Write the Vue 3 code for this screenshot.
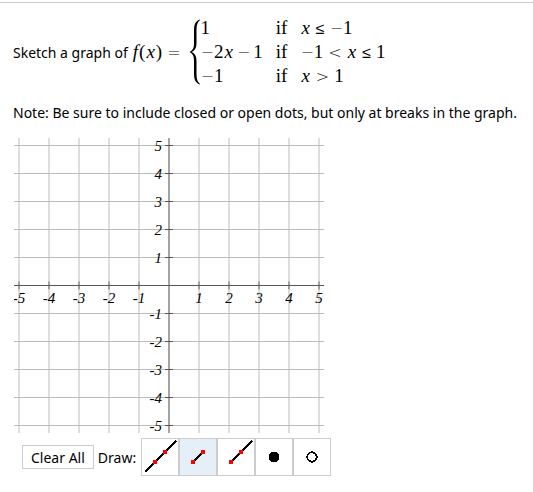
<template>
  <main class="question">
    <div class="prompt">
      <span>Sketch a graph of</span>
      <span class="math fn"><span class="var">f</span>(<span class="var">x</span>)<span class="rel">=</span></span>
      <svg class="brace" viewBox="0 0 12 66" aria-hidden="true">
        <path d="M10.5 0.5 C7 2 5 5 5 11 V24 C5 29 4 31 0.5 33 C4 35 5 37 5 42 V55 C5 61 7 64 10.5 65.5 L11 65 C8.5 63 7.5 60 7.5 55 V42 C7.5 37 6 34.5 2.5 33 C6 31.5 7.5 29 7.5 24 V11 C7.5 6 8.5 3 11 1 Z" />
      </svg>
      <div class="math cases">
        <template v-for="(row, r) in cases" :key="r">
          <span class="expr">
            <span v-for="(t, i) in row.value" :key="i" :class="t.type">{{ t.text }}</span>
          </span>
          <span>if</span>
          <span class="expr">
            <span v-for="(t, i) in row.domain" :key="i" :class="t.type">{{ t.text }}</span>
          </span>
        </template>
      </div>
    </div>

    <p class="note">
      Note: Be sure to include closed or open dots, but only at breaks in the graph.
    </p>

    <svg class="graph" width="310" height="295" viewBox="0 0 310 295" role="img" aria-label="Coordinate grid">
      <g class="grid-v">
        <line v-for="n in ticks" :key="n" :x1="px(n)" y1="0" :x2="px(n)" y2="295" />
      </g>
      <g class="grid-h">
        <line v-for="n in ticks" :key="n" x1="0" :y1="py(n)" x2="310" :y2="py(n)" />
      </g>
      <g class="axis-y">
        <line :x1="px(0)" y1="0" :x2="px(0)" y2="295" />
        <line v-for="n in ticks" :key="n" :x1="px(n)" :y1="py(0) - 4" :x2="px(n)" :y2="py(0) + 4" />
      </g>
      <g class="axis-x">
        <line x1="0" :y1="py(0)" x2="310" :y2="py(0)" />
        <line v-for="n in ticks" :key="n" :x1="px(0) - 4" :y1="py(n)" :x2="px(0) + 4" :y2="py(n)" />
      </g>
      <g class="labels">
        <text v-for="n in ticks" :key="n" :x="px(n)" :y="py(0) + 17" text-anchor="middle">{{ n }}</text>
      </g>
      <g class="labels">
        <text v-for="n in ticks" :key="n" :x="px(0) - 7" :y="py(n) + 5" text-anchor="end">{{ n }}</text>
      </g>
    </svg>

    <div class="toolbar">
      <button type="button" class="clear" @click="tool = 'segment'">Clear All</button>
      <span id="draw-label">Draw:</span>
      <div class="tools" role="group" aria-labelledby="draw-label">
        <button
          v-for="t in tools"
          :key="t.id"
          type="button"
          class="tool"
          :class="{ selected: tool === t.id }"
          :aria-label="t.label"
          :aria-pressed="tool === t.id"
          @click="tool = t.id"
        >
          <svg width="36" height="36" viewBox="0 0 36 36">
            <path v-if="t.path" :d="t.path" class="stroke" />
            <template v-if="t.path">
              <rect x="11" y="21" width="4" height="4" fill="#f00" />
              <rect x="21" y="11" width="4" height="4" fill="#f00" />
            </template>
            <circle v-if="t.id === 'closed'" cx="18" cy="18" r="5.5" />
            <circle v-if="t.id === 'open'" cx="18" cy="18" r="4.7" class="stroke" />
          </svg>
        </button>
      </div>
    </div>
  </main>
</template>

<script setup>
import { ref } from 'vue'

const tool = ref('segment')

const ticks = [-5, -4, -3, -2, -1, 1, 2, 3, 4, 5]

const tools = [
  { id: 'line', label: 'Line', path: 'M3 33 L34 2' },
  { id: 'segment', label: 'Line segment', path: 'M13 23 L23 13' },
  { id: 'ray', label: 'Ray', path: 'M13 23 L34 2' },
  { id: 'closed', label: 'Closed dot' },
  { id: 'open', label: 'Open dot' }
]

const num = text => ({ type: 'num', text })
const neg = { type: 'neg', text: '−' }
const v = text => ({ type: 'var', text })
const rel = text => ({ type: 'rel', text })
const op = text => ({ type: 'op', text })

const cases = [
  { value: [num('1')], domain: [v('x'), rel('≤'), neg, num('1')] },
  { value: [neg, num('2'), v('x'), op('−'), num('1')], domain: [neg, num('1'), rel('<'), v('x'), rel('≤'), num('1')] },
  { value: [neg, num('1')], domain: [v('x'), rel('>'), num('1')] }
]

function px(n) {
  return 155 + n * 30
}

// half pixel keeps the thin horizontal lines crisp
function py(n) {
  return 147.5 - n * 28
}
</script>

<style>
body {
  margin: 0;
  background: #fff;
}
</style>

<style scoped>
.question {
  margin-top: 2px;
  padding: 13px 13px;
  border-top: 1px solid #ccc;
  color: #000;
  font-family: "Noto Sans", "Open Sans", sans-serif;
  font-size: 14px;
}

.prompt {
  display: flex;
  align-items: center;
  white-space: nowrap;
}

.math {
  font-family: "Liberation Serif", serif;
  font-size: 19px;
}

.fn {
  margin-left: 4px;
}

.var {
  padding: 0 1px;
  font-style: italic;
}

.neg,
.rel,
.op {
  font-family: "DejaVu Sans", sans-serif;
  font-size: 16px;
  font-weight: 200;
  line-height: 1;
}

.rel {
  margin: 0 5px;
}

.op {
  margin: 0 3px;
}

.brace {
  width: 12px;
  height: 66px;
  margin-left: 3px;
}

.cases {
  display: grid;
  grid-template-columns: auto auto auto;
  column-gap: 13px;
  line-height: 24px;
}

.note {
  margin: 15px 0;
  line-height: 20px;
}

.graph {
  display: block;
  margin-left: 1px;
}

.grid-v {
  stroke: #ddd;
  stroke-width: 2;
}

.grid-h {
  stroke: #bbb;
  stroke-width: 1;
}

.axis-y {
  stroke: #a3a3a3;
  stroke-width: 2;
}

.axis-x {
  stroke: #555;
  stroke-width: 1;
}

.labels {
  font-family: "Liberation Serif", serif;
  font-size: 15px;
  font-style: italic;
}

.toolbar {
  display: flex;
  align-items: center;
  gap: 4px;
  margin: 5px 0 0 9px;
}

.clear {
  height: 24px;
  padding: 0 8px;
  border: 1px solid #ccc;
  background: #fff;
  color: #000;
  font: inherit;
}

.tools {
  display: flex;
  margin-left: 1px;
}

.tool {
  display: block;
  padding: 0;
  border: 1px solid #ccc;
  background: #fff;
}

.tool svg {
  display: block;
  shape-rendering: crispEdges;
}

.tool.selected {
  background: #e5eff8;
}

.stroke {
  fill: none;
  stroke: #000;
  stroke-width: 2;
}
</style>
